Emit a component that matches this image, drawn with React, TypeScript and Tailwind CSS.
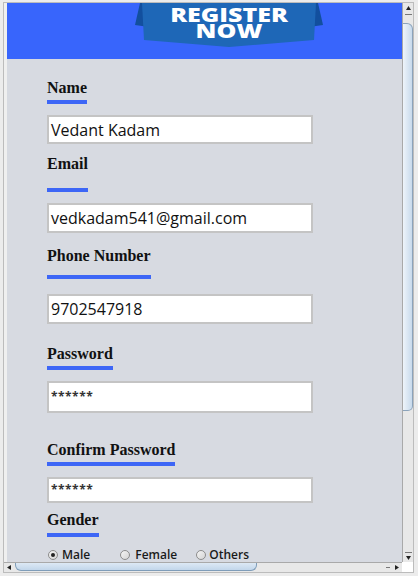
import React from "react";

const serif = "font-['Liberation_Serif',serif]";
const sans = "font-['Open_Sans',sans-serif]";

function Label({ text, pb, mt }: { text: string; pb: string; mt: string }) {
  return (
    <div
      className={`${serif} ${mt} ${pb} text-[16px] leading-[18px] font-bold text-[#111] border-b-4 border-[#3d66f6] whitespace-nowrap`}
    >
      {text}
    </div>
  );
}

function Box({ value, cls, pw }: { value: string; cls: string; pw?: boolean }) {
  return (
    <div
      className={`${cls} w-[266px] bg-white border-2 border-[#c4c4c4] flex items-center pl-[2px] ${sans} ${
        pw ? "text-[12px] font-bold text-[#333] tracking-[0.5px]" : "text-[16px] font-medium text-[#111]"
      } whitespace-nowrap`}
    >
      {value}
    </div>
  );
}

function Radio({ checked }: { checked?: boolean }) {
  return (
    <div className="w-[10px] h-[10px] rounded-full border border-[#8c8c8c] bg-gradient-to-br from-[#f4f4f4] to-[#d4d4d4] flex items-center justify-center shrink-0">
      {checked && <div className="w-[4px] h-[4px] rounded-full bg-[#222]" />}
    </div>
  );
}

function Banner() {
  return (
    <div className="relative ml-[127px] w-[190px] h-[46px]">
      <svg className="absolute inset-0" width="190" height="46" viewBox="0 0 190 46">
        <polygon points="1,22 6,0 15,0 15,24" fill="#124f9e" />
        <polygon points="189,22 184,0 175,0 175,24" fill="#124f9e" />
        <polygon points="8,0 182,0 180,37 95,44 10,37" fill="#1e67b7" />
      </svg>
      <div className="relative flex justify-center pt-[4px]">
        <div
          className={`w-[100px] text-center ${sans} text-white text-[20px] leading-[16px] font-extrabold scale-x-[1.25]`}
        >
          REGISTER NOW
        </div>
      </div>
    </div>
  );
}

function Content() {
  return (
    <div className="w-[395px] h-full flex flex-col">
      <div className="h-[56px] shrink-0 bg-[#3865fc] flex items-start">
        <Banner />
      </div>
      <div className="flex-1 bg-[#d7dae1] pl-[40px] flex flex-col items-start">
        <Label text="Name" mt="mt-[20px]" pb="pb-[3px]" />
        <Box value="Vedant Kadam" cls="mt-[11px] h-[29px]" />
        <Label text="Email" mt="mt-[11px]" pb="pb-[15px]" />
        <Box value="vedkadam541@gmail.com" cls="mt-[11px] h-[30px]" />
        <Label text="Phone Number" mt="mt-[14px]" pb="pb-[10px]" />
        <Box value="9702547918" cls="mt-[15px] h-[30px]" />
        <Label text="Password" mt="mt-[21px]" pb="pb-[3px]" />
        <Box value="******" cls="mt-[11px] h-[32px]" pw />
        <Label text="Confirm Password" mt="mt-[28px]" pb="pb-[3px]" />
        <Box value="******" cls="mt-[11px] h-[26px]" pw />
        <Label text="Gender" mt="mt-[8px]" pb="pb-[4px]" />
        <div className={`mt-[10px] h-[15px] flex items-center ${sans} text-[12px] font-semibold text-[#1a1a1a] whitespace-nowrap`}>
          <div className="ml-[1px]">
            <Radio checked />
          </div>
          <span className="ml-[4px]">Male</span>
          <div className="ml-[30px]">
            <Radio />
          </div>
          <span className="ml-[5px]">Female</span>
          <div className="ml-[19px]">
            <Radio />
          </div>
          <span className="ml-[3px]">Others</span>
        </div>
      </div>
    </div>
  );
}

function VScroll() {
  return (
    <div className="w-[11px] h-full bg-[#e8e8e8] border-l border-[#a9a9a9] flex flex-col items-center">
      <div className="h-[10px] w-full flex items-center justify-center">
        <svg width="5" height="4" viewBox="0 0 5 4">
          <polygon points="2.5,0 5,4 0,4" fill="#222" />
        </svg>
      </div>
      <div className="mt-[1px] w-[7px] h-[1px] bg-[#777]" />
      <div className="mt-[8px] w-full h-[388px] rounded-tr-[6px] rounded-br-[5px] border border-l-0 border-[#8ba3bb] bg-gradient-to-r from-[#eef4fa] to-[#c8daec]" />
      <div className="flex-1" />
      <div className="w-[7px] h-[1px] bg-[#777]" />
      <div className="h-[9px] w-full flex items-center justify-center">
        <svg width="5" height="4" viewBox="0 0 5 4">
          <polygon points="0,0 5,0 2.5,4" fill="#222" />
        </svg>
      </div>
    </div>
  );
}

function HScroll() {
  return (
    <div className="w-[398px] h-full bg-[#e8e8e8] border-t border-[#a9a9a9] flex items-start">
      <div className="w-[10px] h-full flex items-center justify-center">
        <svg width="4" height="5" viewBox="0 0 4 5">
          <polygon points="0,2.5 4,0 4,5" fill="#222" />
        </svg>
      </div>
      <div className="ml-[1px] w-[242px] h-[8px] rounded-b-[6px] border border-t-0 border-[#7f9db9] bg-gradient-to-b from-[#dde9f5] to-[#c2d6ea]" />
      <div className="flex-1" />
      <div className="w-[4px] h-[1px] bg-[#777] self-center mr-[2px]" />
      <div className="w-[10px] h-full flex items-center justify-center">
        <svg width="4" height="5" viewBox="0 0 4 5">
          <polygon points="4,2.5 0,0 0,5" fill="#222" />
        </svg>
      </div>
    </div>
  );
}

export default function App() {
  return (
    <div className="w-[418px] h-[576px] bg-[#ececec] pt-[2px] pl-[3px] pr-[4px] pb-[3px] overflow-hidden">
      <div className="h-full border border-[#bcbcbc] bg-[#f3f3f3] flex flex-col">
        <div className="flex h-[559px] shrink-0">
          <div className="w-[3px] bg-[#efefef]" />
          <Content />
          <VScroll />
        </div>
        <div className="flex h-[10px] shrink-0">
          <HScroll />
          <div className="w-[11px] bg-white" />
        </div>
      </div>
    </div>
  );
}
